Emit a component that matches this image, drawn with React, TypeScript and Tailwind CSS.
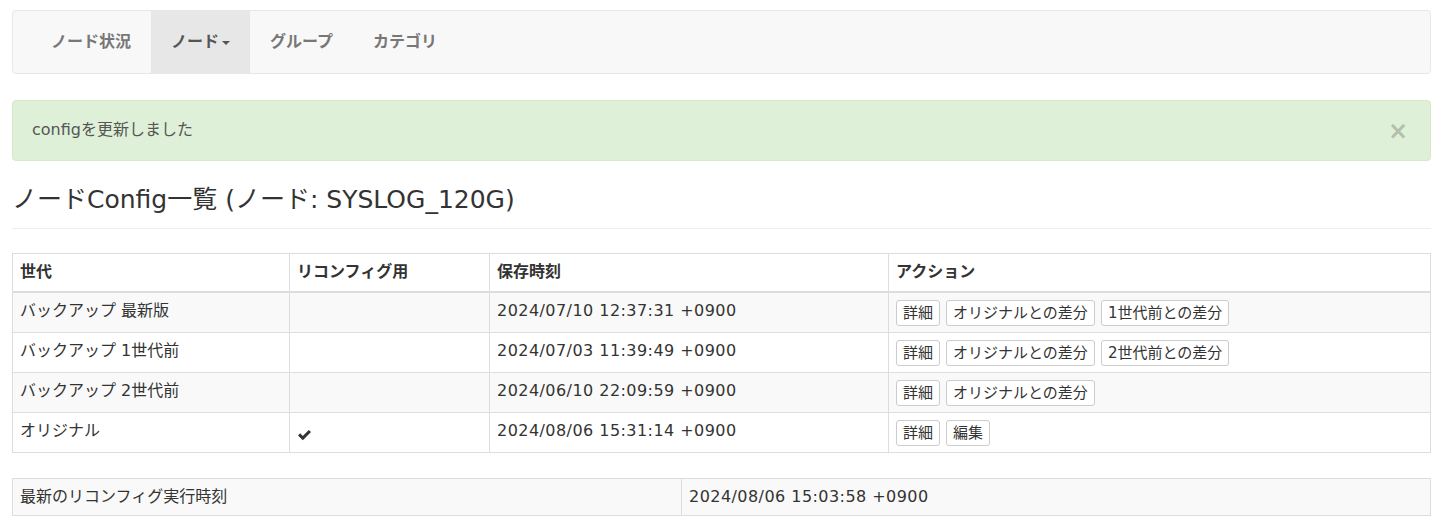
import React from "react";

const rows = [
  {
    gen: "バックアップ 最新版",
    reconfig: false,
    time: "2024/07/10 12:37:31 +0900",
    actions: ["詳細", "オリジナルとの差分", "1世代前との差分"],
  },
  {
    gen: "バックアップ 1世代前",
    reconfig: false,
    time: "2024/07/03 11:39:49 +0900",
    actions: ["詳細", "オリジナルとの差分", "2世代前との差分"],
  },
  {
    gen: "バックアップ 2世代前",
    reconfig: false,
    time: "2024/06/10 22:09:59 +0900",
    actions: ["詳細", "オリジナルとの差分"],
  },
  {
    gen: "オリジナル",
    reconfig: true,
    time: "2024/08/06 15:31:14 +0900",
    actions: ["詳細", "編集"],
  },
];

function Check() {
  return (
    <svg width="15" height="12" viewBox="0 0 15 12" className="mt-[2px]">
      <path d="M1 6.5 L3.2 4.3 L5.8 6.9 L11.8 0.9 L14 3.1 L5.8 11.3 Z" fill="#333" />
    </svg>
  );
}

export default function App() {
  return (
    <div
      className="min-h-screen bg-white px-3 pt-[10px] text-[16px] leading-[20px] text-[#333]"
      style={{ fontFamily: '"DejaVu Sans", "Noto Sans CJK JP", sans-serif' }}
    >
      <nav className="flex h-[64px] rounded border border-[#e7e7e7] bg-[#f8f8f8] pl-[18px]">
        <a className="flex items-center px-[20px] font-bold text-[#777]">ノード状況</a>
        <a className="flex items-center gap-[3px] bg-[#e7e7e7] px-[20px] font-bold text-[#555]">
          ノード
          <span className="mt-[2px] inline-block h-0 w-0 border-x-[4px] border-t-[4px] border-x-transparent border-t-[#555]" />
        </a>
        <a className="flex items-center px-[20px] font-bold text-[#777]">グループ</a>
        <a className="flex items-center px-[20px] font-bold text-[#777]">カテゴリ</a>
      </nav>

      <div className="mt-[26px] flex h-[61px] items-center justify-between rounded border border-[#d6e9c6] bg-[#dff0d8] pl-[19px] pr-[22px] text-[16px] text-[#555]">
        <span className="-mt-[2px]">configを更新しました</span>
        <span className="text-[24px] font-bold leading-none text-black opacity-20">×</span>
      </div>

      <h1 className="mt-[23px] border-b border-[#eee] pb-[12px] text-[25px] font-normal leading-[32px] text-[#333]">
        ノードConfig一覧 (ノード: SYSLOG_120G)
      </h1>

      <table className="mt-[24px] w-full border-collapse border border-[#ddd]">
        <thead>
          <tr>
            <th className="h-[38px] w-[277px] border border-b-2 border-[#ddd] px-[7px] py-[8px] text-left font-bold">世代</th>
            <th className="w-[200px] border border-b-2 border-[#ddd] px-[7px] py-[8px] text-left font-bold">リコンフィグ用</th>
            <th className="w-[399px] border border-b-2 border-[#ddd] px-[7px] py-[8px] text-left font-bold">保存時刻</th>
            <th className="border border-b-2 border-[#ddd] px-[7px] py-[8px] text-left font-bold">アクション</th>
          </tr>
        </thead>
        <tbody>
          {rows.map((r, i) => (
            <tr key={i} className={i % 2 === 0 ? "bg-[#f9f9f9]" : "bg-white"}>
              <td className="h-[40px] border border-[#ddd] px-[7px] py-[6px] align-top">
                <div className="pt-[2px]">{r.gen}</div>
              </td>
              <td className="border border-[#ddd] px-[7px] py-[6px] align-top">
                {r.reconfig ? <div className="pt-[8px]"><Check /></div> : null}
              </td>
              <td className="border border-[#ddd] px-[7px] py-[6px] align-top">
                <div className="pt-[2px] tracking-[0.45px]">{r.time}</div>
              </td>
              <td className="border border-[#ddd] px-[7px] pb-[6px] pt-[7px] align-top">
                <div className="flex gap-[6px]">
                  {r.actions.map((a) => (
                    <button
                      key={a}
                      className="h-[26px] rounded-[3px] border border-[#ccc] bg-white px-[6px] text-[15px] leading-[20px] text-[#333]"
                    >
                      {a}
                    </button>
                  ))}
                </div>
              </td>
            </tr>
          ))}
        </tbody>
      </table>

      <table className="mt-[25px] w-full border-collapse border border-[#ddd]">
        <tbody>
          <tr className="bg-[#f9f9f9]">
            <td className="h-[37px] w-[669px] border border-[#ddd] px-[7px] py-[8px]">最新のリコンフィグ実行時刻</td>
            <td className="border border-[#ddd] px-[7px] py-[8px] tracking-[0.45px]">2024/08/06 15:03:58 +0900</td>
          </tr>
        </tbody>
      </table>
    </div>
  );
}
